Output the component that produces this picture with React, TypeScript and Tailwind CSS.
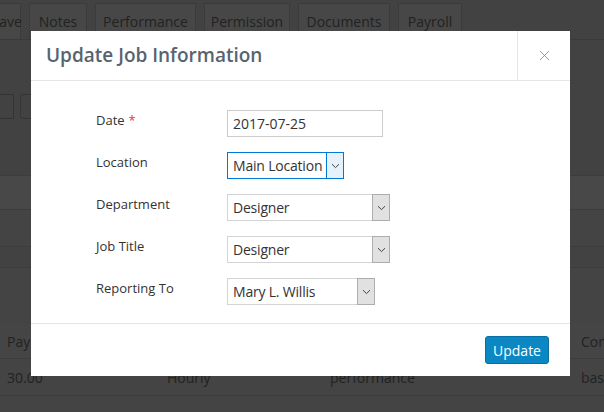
import { X } from "lucide-react";

const tabs = [
  { label: "ave", w: "w-[35px]" },
  { label: "Notes", w: "w-[58px]" },
  { label: "Performance", w: "w-[101px]" },
  { label: "Permission", w: "w-[86px]" },
  { label: "Documents", w: "w-[92px]" },
  { label: "Payroll", w: "w-[64px]" },
];

function Chevron() {
  return (
    <svg width="9" height="6" viewBox="0 0 9 6" fill="none">
      <path d="M1 1.2 L4.5 4.6 L8 1.2" stroke="#444" strokeWidth="1" />
    </svg>
  );
}

function SelectBox({ value, w, focus }: { value: string; w: string; focus?: boolean }) {
  return (
    <div
      className={`flex h-[27px] ${w} items-stretch border ${
        focus ? "border-[#0078d7]" : "border-[#d4d4d4]"
      } bg-white`}
    >
      <div className="flex flex-1 items-center pl-[5px] text-[14px] tracking-[-0.2px] text-[#333]">{value}</div>
      <div
        className={`my-[-1px] mr-[-1px] flex w-[18px] items-center justify-center border ${
          focus ? "border-[#0078d7] bg-[#e5f1fb]" : "border-[#adadad] bg-[#e1e1e1]"
        }`}
      >
        <Chevron />
      </div>
    </div>
  );
}

function Row({ label, req, children }: { label: string; req?: boolean; children: React.ReactNode }) {
  return (
    <div className="flex items-start">
      <div className="w-[131px] pt-[1px] text-[13px] leading-[18px] text-[#333]">
        {label}
        {req && <span className="ml-1 text-[#e33]">*</span>}
      </div>
      {children}
    </div>
  );
}

export default function App() {
  return (
    <div
      className="relative h-[412px] w-[604px] overflow-hidden bg-[#444]"
      style={{ fontFamily: '"Open Sans", "Noto Sans", sans-serif' }}
    >
      {/* page behind the overlay */}
      <div className="flex h-[40px] items-end gap-[8px] border-b border-[#3a3a3a] bg-[#424242]">
        {tabs.map((t, i) => (
          <div
            key={t.label}
            className={`flex h-[36px] ${t.w} items-center justify-center border border-b-0 border-[#3b3b3b] bg-[#474747] text-[14px] text-[#222] ${
              i === 0 ? "ml-[-14px] pl-[14px]" : ""
            }`}
          >
            {t.label}
          </div>
        ))}
      </div>
      <div className="h-[135px] bg-[#424242]">
        <div className="flex gap-[6px] pt-[54px]">
          <div className="ml-[-6px] flex h-[25px] w-[20px] items-center justify-end border border-[#333] pr-[2px]">
            <Chevron />
          </div>
          <div className="h-[25px] w-[30px] rounded-[3px] border border-[#353535]" />
        </div>
      </div>
      <div className="h-[35px] border-y border-[#3c3c3c] bg-[#484848]" />
      <div className="h-[37px] border-b border-[#3c3c3c] bg-[#444]" />
      <div className="h-[21px] border-b border-[#3c3c3c] bg-[#424242]" />
      <div className="h-[55px] bg-[#444]" />
      <div className="relative h-[36px] border-b border-[#3c3c3c] bg-[#454545] text-[14px] text-[#222]">
        <span className="absolute left-[7px] top-[8px]">Pay</span>
        <span className="absolute left-[581px] top-[8px]">Com</span>
      </div>
      <div className="relative h-[37px] border-b border-[#3c3c3c] bg-[#444] text-[14px] text-[#222]">
        <span className="absolute left-[7px] top-[8px]">30.00</span>
        <span className="absolute left-[167px] top-[8px]">Hourly</span>
        <span className="absolute left-[330px] top-[8px]">performance</span>
        <span className="absolute left-[581px] top-[8px]">basic</span>
      </div>

      {/* modal */}
      <div className="absolute left-[31px] top-[31px] w-[539px] bg-white">
        <div className="flex h-[50px] border-b border-[#e5e5e5]">
          <div className="flex flex-1 items-center pl-[15px] text-[19px] font-semibold text-[#566470]">
            Update Job Information
          </div>
          <div className="flex w-[53px] items-center justify-center border-l border-[#e5e5e5]">
            <X size={17} strokeWidth={1.2} color="#7f8e99" />
          </div>
        </div>
        <div className="flex flex-col gap-[15px] pb-[18px] pl-[65px] pt-[29px]">
          <Row label="Date" req>
            <div className="flex h-[27px] w-[156px] items-center border border-[#ccc] pl-[5px] text-[14px] text-[#333]">
              2017-07-25
            </div>
          </Row>
          <Row label="Location">
            <SelectBox value="Main Location" w="w-[117px]" focus />
          </Row>
          <Row label="Department">
            <SelectBox value="Designer" w="w-[163px]" />
          </Row>
          <Row label="Job Title">
            <SelectBox value="Designer" w="w-[163px]" />
          </Row>
          <Row label="Reporting To">
            <SelectBox value="Mary L. Willis" w="w-[148px]" />
          </Row>
        </div>
        <div className="flex justify-end border-t border-[#e5e5e5] pb-[12px] pr-[21px] pt-[12px]">
          <button className="h-[28px] w-[64px] rounded-[3px] border border-[#0a6fa3] bg-[#0b87c4] text-[14px] text-white">
            Update
          </button>
        </div>
      </div>
    </div>
  );
}
